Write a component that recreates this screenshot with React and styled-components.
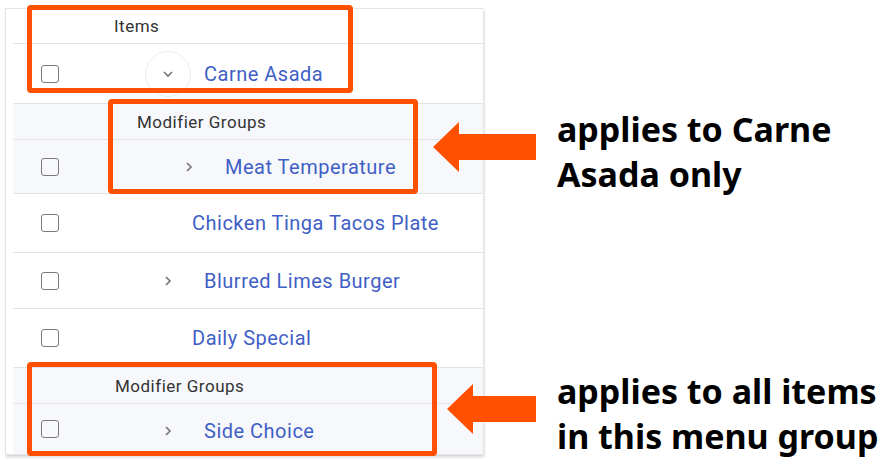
import React from "react";
import styled, { createGlobalStyle } from "styled-components";

const GlobalStyle = createGlobalStyle`
  html, body {
    margin: 0;
    padding: 0;
    background: #fff;
  }
  body {
    font-family: Roboto, "Liberation Sans", sans-serif;
  }
`;

const ORANGE = "#ff5000";

const rows = [
  { kind: "header", label: "Items", pad: 101, height: 35 },
  { kind: "item", name: "Carne Asada", indent: 86, expander: "open", height: 60 },
  { kind: "header", label: "Modifier Groups", pad: 124, height: 36, shade: true },
  { kind: "item", name: "Meat Temperature", indent: 107, expander: "closed", height: 54, shade: true },
  { kind: "item", name: "Chicken Tinga Tacos Plate", indent: 133, height: 59 },
  { kind: "item", name: "Blurred Limes Burger", indent: 86, expander: "closed", height: 56 },
  { kind: "item", name: "Daily Special", indent: 133, height: 59 },
  { kind: "header", label: "Modifier Groups", pad: 102, height: 36, shade: true },
  { kind: "item", name: "Side Choice", indent: 86, expander: "closed", height: 50, shade: true, last: true },
];

const App = () => {
  return (
    <Stage>
      <GlobalStyle />
      <Panel>
        {rows.map((r, i) =>
          r.kind === "header" ? (
            <Row key={i} $height={r.height} $shade={r.shade} $last={r.last}>
              <HeaderLabel $pad={r.pad}>{r.label}</HeaderLabel>
            </Row>
          ) : (
            <Row key={i} $height={r.height} $shade={r.shade} $last={r.last}>
              <Check />
              <NameCell $indent={r.indent} $drop={r.last ? 4 : 0}>
                {r.expander && (
                  <Expander $ring={r.expander === "open"}>
                    {r.expander === "open" ? <ChevronDown /> : <ChevronRight />}
                  </Expander>
                )}
                <ItemName>{r.name}</ItemName>
              </NameCell>
            </Row>
          )
        )}
      </Panel>

      <Highlight style={{ left: 27, top: 5, width: 326, height: 88 }} />
      <Highlight style={{ left: 108, top: 99, width: 310, height: 95 }} />
      <Highlight style={{ left: 27, top: 362, width: 410, height: 94 }} />

      <Callout style={{ left: 433, top: 122 }}>
        <Arrow length={103} />
        <Note>
          applies to Carne
          <br />
          Asada only
        </Note>
      </Callout>
      <Callout style={{ left: 447, top: 384 }}>
        <Arrow length={89} />
        <Note>
          applies to all items
          <br />
          in this menu group
        </Note>
      </Callout>
    </Stage>
  );
};

const ChevronDown = () => (
  <svg width="12" height="8" viewBox="0 0 12 8">
    <polyline points="2,2 6,6 10,2" fill="none" stroke="#777" strokeWidth="1.7" />
  </svg>
);

const ChevronRight = () => (
  <svg width="8" height="12" viewBox="0 0 8 12">
    <polyline points="2,2 6,6 2,10" fill="none" stroke="#777" strokeWidth="1.7" />
  </svg>
);

const Arrow = ({ length }) => (
  <svg width={length} height="50" viewBox={`0 0 ${length} 50`}>
    <polygon
      points={`0,25 26,0 26,12 ${length},12 ${length},38 26,38 26,50`}
      fill={ORANGE}
    />
  </svg>
);

const Stage = styled.div`
  position: relative;
  width: 892px;
  height: 465px;
  overflow: hidden;
`;

const Panel = styled.div`
  margin: 8px 0 0 5px;
  width: 478px;
  box-sizing: border-box;
  padding-left: 7px;
  background: #fff;
  border: 1px solid #e4e4e4;
  border-right: none;
  box-shadow: 1px 2px 3px rgba(0, 0, 0, 0.18);
  display: flex;
  flex-direction: column;
`;

const Row = styled.div`
  height: ${(p) => p.$height}px;
  box-sizing: border-box;
  display: flex;
  align-items: center;
  background: ${(p) => (p.$shade ? "#f7f8fc" : "#fff")};
  border-bottom: ${(p) => (p.$last ? "none" : "1px solid #e3e3e5")};
`;

const HeaderLabel = styled.span`
  padding-left: ${(p) => p.$pad}px;
  font-size: 17px;
  letter-spacing: 0.5px;
  color: #333;
`;

const Check = styled.span`
  margin-left: 28px;
  width: 18px;
  height: 18px;
  box-sizing: border-box;
  border: 1.5px solid #7a7a7a;
  border-radius: 3px;
  flex-shrink: 0;
`;

const NameCell = styled.div`
  display: flex;
  align-items: center;
  margin-left: ${(p) => p.$indent}px;
  padding-top: ${(p) => p.$drop}px;
`;

const Expander = styled.span`
  width: 46px;
  height: 46px;
  box-sizing: border-box;
  border-radius: 50%;
  border: 1px solid ${(p) => (p.$ring ? "#ececec" : "transparent")};
  display: flex;
  align-items: center;
  justify-content: center;
  margin-right: 13px;
`;

const ItemName = styled.span`
  font-size: 20px;
  color: #3f5fc6;
  letter-spacing: 0.5px;
`;

const Highlight = styled.div`
  position: absolute;
  box-sizing: border-box;
  border: 5px solid ${ORANGE};
  border-radius: 4px;
`;

const Callout = styled.div`
  position: absolute;
  display: flex;
  align-items: flex-start;
  gap: 21px;
`;

const Note = styled.div`
  margin-top: -15px;
  font-family: "Noto Sans", "Open Sans", sans-serif;
  font-weight: 700;
  font-size: 34px;
  line-height: 45px;
  color: #000;
  white-space: nowrap;
`;

export default App;
